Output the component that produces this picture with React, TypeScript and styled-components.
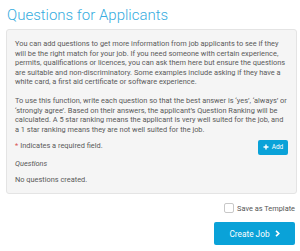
import React from 'react';
import styled, { createGlobalStyle } from 'styled-components';

const GlobalStyle = createGlobalStyle`
  html, body {
    margin: 0;
    padding: 0;
    background: #fff;
  }
  body {
    font-family: Roboto, "Liberation Sans", Arial, sans-serif;
  }
`;

const Page = styled.div`
  padding: 5px 3px 0 6px;
  box-sizing: border-box;
  width: 300px;
`;

const Title = styled.h1`
  margin: 0 0 4px 1px;
  font-size: 15px;
  line-height: 20px;
  font-weight: 300;
  color: #36ace0;
`;

const Panel = styled.div`
  background: #f5f5f5;
  border: 1px solid #e4e4e4;
  border-radius: 3px;
  padding: 9px 8px 9px 8px;
`;

const Text = styled.p`
  margin: 0 0 9.5px;
  font-size: 7.4px;
  line-height: 9.5px;
  color: #5a5a5a;
  white-space: nowrap;
`;

const RequiredRow = styled.div`
  display: flex;
  justify-content: space-between;
  align-items: flex-start;
  margin-top: -4px;
  margin-bottom: 4px;
`;

const Note = styled.span`
  font-size: 7.4px;
  line-height: 9.5px;
  color: #5a5a5a;
  padding-top: 1px;
`;

const Star = styled.span`
  color: #d9534f;
  margin-right: 2px;
`;

const Button = styled.button<{ $big?: boolean }>`
  display: inline-flex;
  align-items: center;
  justify-content: center;
  gap: ${(p) => (p.$big ? '5px' : '3px')};
  width: ${(p) => (p.$big ? '81px' : '30px')};
  height: ${(p) => (p.$big ? '23px' : '15px')};
  padding: 0;
  border: none;
  border-radius: 2px;
  background: #0aa2d8;
  color: #fff;
  font-family: Roboto, "Liberation Sans", Arial, sans-serif;
  font-size: ${(p) => (p.$big ? '8.3px' : '6.5px')};
  cursor: pointer;
`;

const Heading = styled.div`
  font-size: 7.4px;
  line-height: 9.5px;
  font-style: italic;
  color: #555;
  margin-bottom: 6.5px;
`;

const Empty = styled.div`
  font-size: 7.4px;
  line-height: 9.5px;
  color: #5a5a5a;
`;

const Footer = styled.div`
  display: flex;
  flex-direction: column;
  align-items: flex-end;
  padding-right: 2px;
`;

const CheckRow = styled.label`
  display: flex;
  align-items: center;
  gap: 3px;
  margin-top: 9px;
  font-size: 7.4px;
  color: #555;
`;

const Box = styled.span`
  width: 8px;
  height: 8px;
  border: 1px solid #c8c8c8;
  border-radius: 2px;
  background: #fff;
`;

const Primary = styled(Button)`
  margin-top: 9px;
`;

const Plus = () => (
  <svg width="6" height="6" viewBox="0 0 6 6">
    <path d="M3 0.5v5M0.5 3h5" stroke="#fff" strokeWidth="1.4" />
  </svg>
);

const Chevron = () => (
  <svg width="5" height="7" viewBox="0 0 5 7">
    <path d="M1 0.8L3.8 3.5L1 6.2" stroke="#fff" strokeWidth="1.6" fill="none" />
  </svg>
);

export default function App() {
  return (
    <Page>
      <GlobalStyle />
      <Title>Questions for Applicants</Title>
      <Panel>
        <Text>
          You can add questions to get more information from job applicants to see if they
          <br />
          will be the right match for your job. If you need someone with certain experience,
          <br />
          permits, qualifications or licences, you can ask them here but ensure the questions
          <br />
          are suitable and non-discriminatory. Some examples include asking if they have a
          <br />
          white card, a first aid certificate or software experience.
        </Text>
        <Text>
          To use this function, write each question so that the best answer is ‘yes’, ‘always’ or
          <br />
          ‘strongly agree’. Based on their answers, the applicant’s Question Ranking will be
          <br />
          calculated. A 5 star ranking means the applicant is very well suited for the job, and
          <br />
          a 1 star ranking means they are not well suited for the job.
        </Text>
        <RequiredRow>
          <Note>
            <Star>*</Star>Indicates a required field.
          </Note>
          <Button>
            <Plus />
            Add
          </Button>
        </RequiredRow>
        <Heading>Questions</Heading>
        <Empty>No questions created.</Empty>
      </Panel>
      <Footer>
        <CheckRow>
          <Box />
          Save as Template
        </CheckRow>
        <Primary $big>
          Create Job
          <Chevron />
        </Primary>
      </Footer>
    </Page>
  );
}
